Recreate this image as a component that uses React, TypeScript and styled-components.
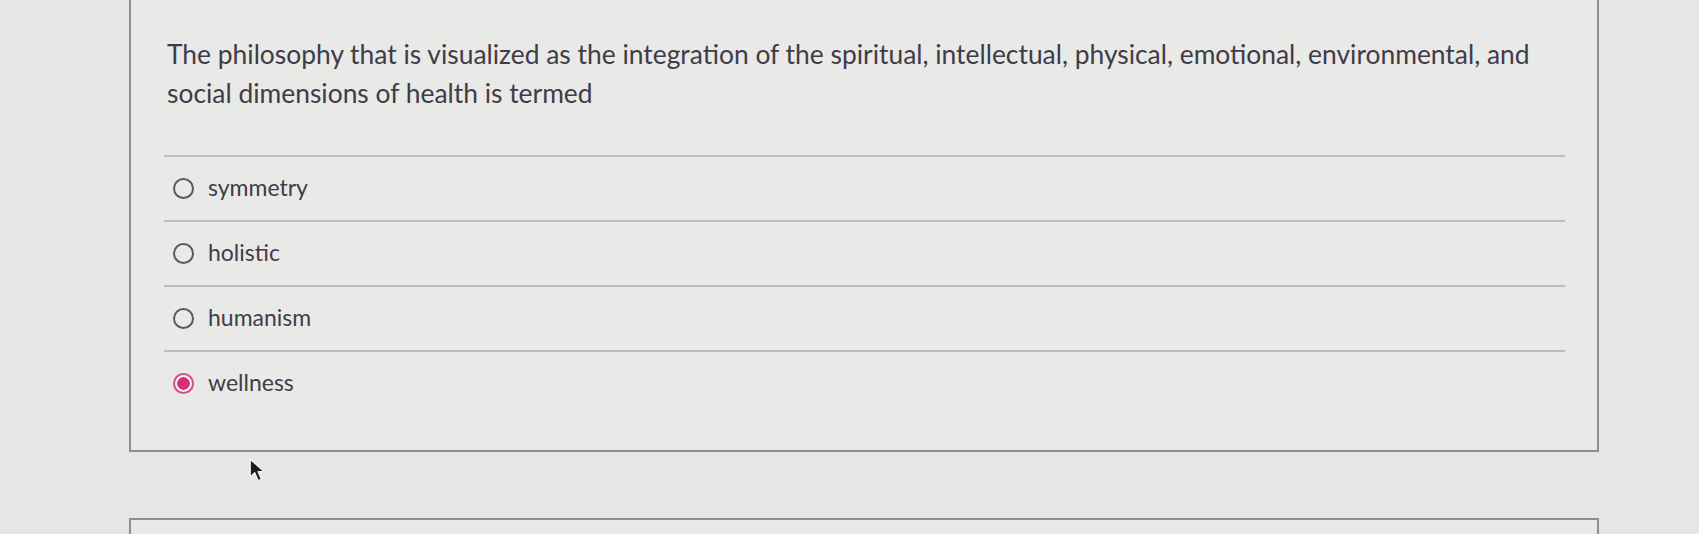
import React from 'react';
import styled, { createGlobalStyle } from 'styled-components';

const GlobalStyle = createGlobalStyle`
    html, body {
        margin: 0;
        padding: 0;
        background: #e6e6e5;
        font-family: 'Lato', 'Liberation Sans', sans-serif;
        overflow: hidden;
    }
`;

const options = ['symmetry', 'holistic', 'humanism', 'wellness'];

export default function App() {
    return (
        <>
            <GlobalStyle />
            <Page>
                <QuestionCard>
                    <Question>
                        The philosophy that is visualized as the integration of the spiritual, intellectual,
                        physical, emotional, environmental, and social dimensions of health is termed
                    </Question>
                    <OptionList>
                        {options.map((opt) => (
                            <OptionRow key={opt}>
                                <Radio $checked={opt === 'wellness'} />
                                <OptionLabel>{opt}</OptionLabel>
                            </OptionRow>
                        ))}
                    </OptionList>
                    <Pointer viewBox="0 0 14 22">
                        <path
                            d="M1 1 L1 17 L5 13 L8 20 L11 18.8 L8 12 L13.5 12 Z"
                            fill="#1c1c1e"
                            stroke="#f2f2f2"
                            strokeWidth="1.2"
                            strokeLinejoin="round"
                        />
                    </Pointer>
                </QuestionCard>
                <NextCard />
            </Page>
        </>
    );
}

const Page = styled.main`
    display: flex;
    flex-direction: column;
    gap: 66px;
    padding: 0 100px 0 129px;
    height: 534px;
    box-sizing: border-box;
`;

const QuestionCard = styled.section`
    position: relative;
    background: #e9e9e8;
    border: 2px solid #8f8f93;
    border-top: none;
    padding: 35px 32px 35px 33px;
`;

const Question = styled.p`
    margin: 0 0 42px 3px;
    font-size: 26.4px;
    line-height: 39px;
    color: #3f3c47;
    max-width: 1385px;
`;

const OptionList = styled.ul`
    list-style: none;
    margin: 0;
    padding: 0;
`;

const OptionRow = styled.li`
    display: flex;
    align-items: center;
    gap: 14px;
    height: 65px;
    padding-left: 9px;
    border-top: 2px solid #bdbdbf;
    box-sizing: border-box;
`;

const Radio = styled.span<{ $checked?: boolean }>`
    display: inline-block;
    width: 21px;
    height: 21px;
    border-radius: 50%;
    box-sizing: border-box;
    border: 2px solid ${(p) => (p.$checked ? '#c9557f' : '#5a5a5e')};
    background: ${(p) =>
        p.$checked ? 'radial-gradient(circle, #d82f78 0 6px, #f3f0f1 6.5px)' : 'transparent'};
`;

const OptionLabel = styled.span`
    font-size: 23px;
    color: #403d47;
    line-height: 1;
    padding-bottom: 2px;
`;

const Pointer = styled.svg`
    position: absolute;
    left: 118px;
    bottom: -33px;
    width: 16px;
    height: 25px;
`;

const NextCard = styled.section`
    flex: 1;
    background: #e9e9e8;
    border: 2px solid #8f8f93;
    border-bottom: none;
`;
